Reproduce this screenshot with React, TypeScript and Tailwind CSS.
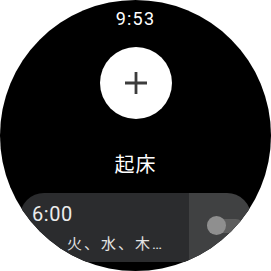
import React from "react";

export default function App() {
  const digit = { fontFamily: "Roboto, 'Noto Sans CJK JP', sans-serif" };
  const cjk = { fontFamily: "'Noto Sans CJK JP', 'Noto Sans', sans-serif" };
  return (
    <div className="w-[271px] h-[271px] bg-white">
      <div className="w-[271px] h-[271px] rounded-full bg-black overflow-hidden flex flex-col items-center">
        <div
          className="mt-[10px] h-[18px] leading-[18px] text-[18px] text-white tracking-[1.2px]"
          style={digit}
        >
          9:53
        </div>
        <div className="mt-[19px] w-[72px] h-[72px] rounded-full bg-white flex items-center justify-center">
          <svg width="24" height="24" viewBox="0 0 24 24">
            <path d="M12 1V23M1 12H23" stroke="#3c3c3c" strokeWidth="2.8" fill="none" />
          </svg>
        </div>
        <div
          className="mt-[35px] h-[20px] leading-[20px] text-[20px] text-white tracking-[1px]"
          style={cjk}
        >
          起床
        </div>
        <div className="mt-[19px] w-[231px] h-[69px] rounded-[24px] overflow-hidden flex shrink-0">
          <div className="flex-1 bg-[#2b2c2e] flex flex-col">
            <div
              className="mt-[11px] ml-[12px] h-[20px] leading-[20px] text-[20px] text-[#ececec] tracking-[0.6px]"
              style={digit}
            >
              6:00
            </div>
            <div
              className="mt-[12px] ml-[47px] h-[16px] leading-[16px] text-[15px] text-[#e4e4e4] tracking-[2px] whitespace-nowrap"
              style={digit}
            >
              火、水、木…
            </div>
          </div>
          <div className="w-[62px] bg-[#404142] flex items-start">
            <div className="relative mt-[23px] ml-[18px] w-[36px] h-[19px]">
              <div className="absolute left-0 right-0 top-[2.5px] bottom-[2.5px] rounded-full bg-[#5e5e5e]" />
              <div className="absolute left-0 top-0 w-[19px] h-[19px] rounded-full bg-[#8f8f8f]" />
            </div>
          </div>
        </div>
      </div>
    </div>
  );
}
